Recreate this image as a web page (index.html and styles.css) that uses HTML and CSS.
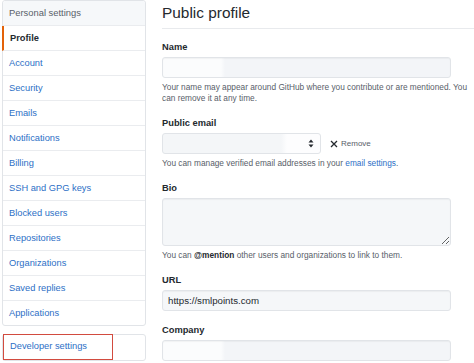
FILE: index.html
```html
<!DOCTYPE html>
<html>
<head>
<meta charset="utf-8">
<link rel="stylesheet" href="styles.css">
</head>
<body>
<div class="page">
  <aside class="side">
    <nav class="menu">
      <div class="menu-head">Personal settings</div>
      <a class="menu-item selected">Profile</a>
      <a class="menu-item">Account</a>
      <a class="menu-item">Security</a>
      <a class="menu-item">Emails</a>
      <a class="menu-item">Notifications</a>
      <a class="menu-item">Billing</a>
      <a class="menu-item">SSH and GPG keys</a>
      <a class="menu-item">Blocked users</a>
      <a class="menu-item">Repositories</a>
      <a class="menu-item">Organizations</a>
      <a class="menu-item">Saved replies</a>
      <a class="menu-item">Applications</a>
    </nav>
    <nav class="menu dev">
      <a class="dev-item"><span class="highlight">Developer settings</span></a>
    </nav>
  </aside>
  <main class="main">
    <h2 class="title">Public profile</h2>
    <div class="group">
      <label class="label">Name</label>
      <div class="field blurred"></div>
      <p class="note">Your name may appear around GitHub where you contribute or are mentioned. You can remove it at any time.</p>
    </div>
    <div class="group">
      <label class="label">Public email</label>
      <div class="email-row">
        <div class="select">
          <svg class="arrows" width="6" height="9" viewBox="0 0 6 9"><path d="M3 0.5 L5.5 3.5 H0.5 Z M3 8.5 L5.5 5.5 H0.5 Z" fill="#24292e"/></svg>
        </div>
        <span class="remove">
          <svg width="8" height="8" viewBox="0 0 8 8"><path d="M1 1 L7 7 M7 1 L1 7" stroke="#24292e" stroke-width="1.3"/></svg>
          Remove
        </span>
      </div>
      <p class="note">You can manage verified email addresses in your <a class="link">email settings</a>.</p>
    </div>
    <div class="group">
      <label class="label">Bio</label>
      <textarea class="field area"></textarea>
      <p class="note">You can <b class="strong">@mention</b> other users and organizations to link to them.</p>
    </div>
    <div class="group">
      <label class="label">URL</label>
      <input class="field text" value="https://smlpoints.com">
    </div>
    <div class="group">
      <label class="label">Company</label>
      <div class="field blurred"></div>
    </div>
  </main>
</div>
</body>
</html>
```

FILE: styles.css
```css
html, body {
  margin: 0;
  padding: 0;
  background: #ffffff;
  overflow: hidden;
}
body {
  font-family: "Liberation Sans", Arial, sans-serif;
  color: #24292e;
  width: 474px;
  height: 363px;
}
.page {
  display: flex;
  gap: 16px;
  padding-left: 2px;
}
.side {
  width: 144px;
  flex: none;
  display: flex;
  flex-direction: column;
  gap: 8px;
}
.menu {
  display: flex;
  flex-direction: column;
  border: 1px solid #e1e4e8;
  border-radius: 3px;
  background: #fff;
}
.menu-head {
  height: 24px;
  line-height: 24px;
  padding-left: 6px;
  font-size: 9.4px;
  color: #586069;
  background: #f6f8fa;
  border-bottom: 1px solid #eaecef;
  border-radius: 3px 3px 0 0;
}
.menu-item {
  height: 24px;
  line-height: 24px;
  padding-left: 6px;
  font-size: 9.3px;
  color: #2d6fc6;
  border-bottom: 1px solid #eaecef;
}
.menu-item:last-child {
  border-bottom: none;
}
.menu-item.selected {
  color: #24292e;
  font-weight: bold;
  border-left: 2px solid #e36209;
  margin-left: -1px;
}
.dev {
  height: 25px;
}
.dev-item {
  display: flex;
  height: 25px;
  margin: -1px 0 0 0;
}
.highlight {
  display: block;
  width: 110px;
  box-sizing: border-box;
  height: 26px;
  line-height: 23px;
  padding-left: 6px;
  font-size: 9.3px;
  color: #2d6fc6;
  border: 1.5px solid #d24b3f;
}
.main {
  flex: 1;
  min-width: 0;
}
.title {
  margin: 0;
  padding: 3px 0 5px 0;
  font-size: 15.4px;
  line-height: 20px;
  font-weight: normal;
  color: #24292e;
  border-bottom: 1px solid #e8eaed;
}
.group {
  width: 289px;
  margin-top: 13px;
  display: flex;
  flex-direction: column;
}
.group:first-of-type {
  margin-top: 12px;
}
.label {
  display: block;
  font-size: 9.3px;
  line-height: 12px;
  font-weight: bold;
  margin-bottom: 4px;
}
.field {
  box-sizing: border-box;
  width: 289px;
  height: 21px;
  border: 1px solid #e1e4e8;
  border-radius: 3px;
  background: #f5f7f9;
  box-shadow: inset 0 1px 1px rgba(27, 31, 35, 0.04);
  margin: 0;
}
.blurred {
  background: linear-gradient(to right, #fbfcfd 0, #fbfcfd 58px, #f3f5f8 62px, #f3f5f8 100%);
}
.area {
  display: block;
  height: 48px;
  resize: vertical;
  font-family: inherit;
}
.text {
  display: block;
  font-family: "Liberation Sans", Arial, sans-serif;
  font-size: 9.7px;
  color: #24292e;
  padding: 0 5px;
  outline: none;
}
.note {
  width: 312px;
  margin: 4px 0 0 0;
  font-size: 8.3px;
  line-height: 11px;
  color: #586069;
}
.link {
  color: #2d6fc6;
}
.strong {
  color: #24292e;
}
.email-row {
  display: flex;
  align-items: center;
  gap: 9px;
}
.select {
  box-sizing: border-box;
  width: 159px;
  height: 21px;
  border: 1px solid #e1e4e8;
  border-radius: 3px;
  background: linear-gradient(to right, #f4f6f8 0, #f4f6f8 118px, #fdfdfe 124px, #fdfdfe 100%);
  display: flex;
  align-items: center;
  justify-content: flex-end;
  padding-right: 6px;
}
.arrows {
  display: block;
}
.remove {
  display: flex;
  align-items: center;
  gap: 3px;
  font-size: 8px;
  color: #586069;
}
```
